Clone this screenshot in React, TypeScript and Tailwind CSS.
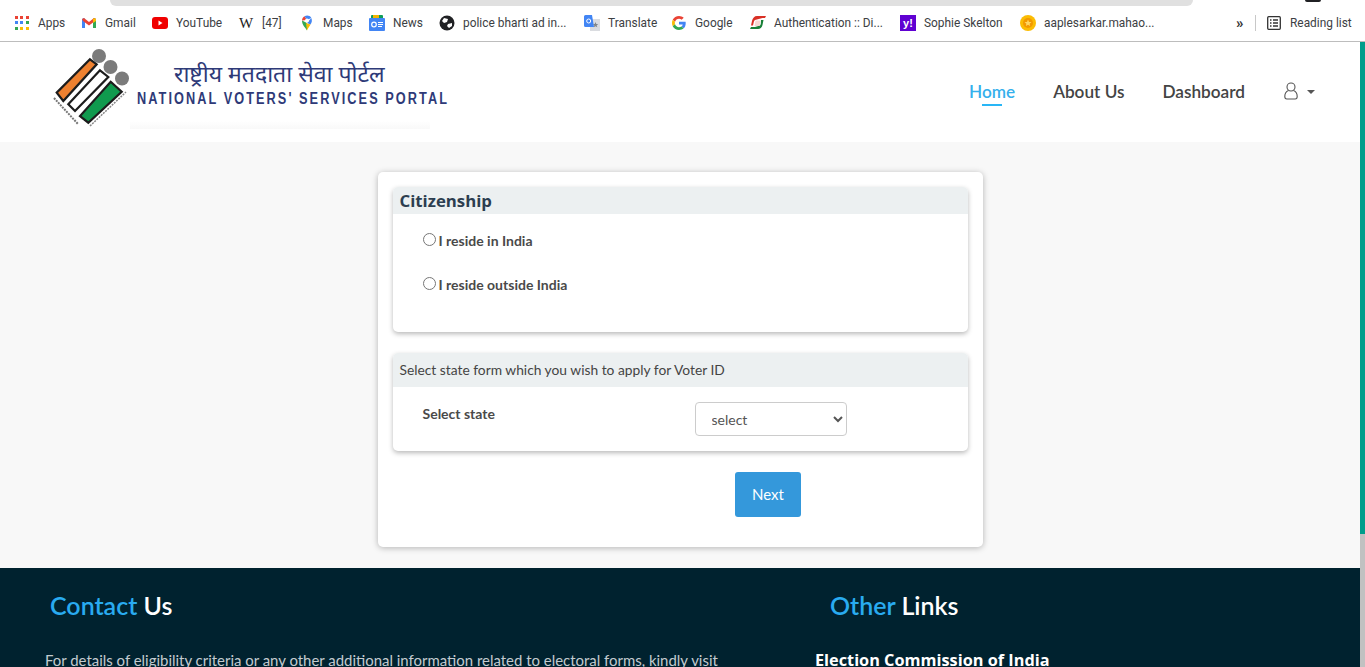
import type { ReactNode } from "react";

function AppsIcon() {
  const colors = ["#ea4335", "#ea4335", "#ea4335", "#4285f4", "#4285f4", "#34a853", "#34a853", "#fbbc05", "#fbbc05"];
  return (
    <div className="grid h-[14px] w-[14px] grid-cols-3 gap-[2px]">
      {colors.map((c, i) => (
        <span key={i} className="block h-[3px] w-[3px]" style={{ backgroundColor: c }} />
      ))}
    </div>
  );
}

function GmailIcon() {
  return (
    <svg viewBox="0 0 16 16" className="size-4">
      <path d="M1 13V4l2-1 1 1v9z" fill="#4285f4" />
      <path d="M12 13V4l1-1 2 1v9z" fill="#34a853" />
      <path d="M1 4l2-1 5 4 5-4 2 1-1 2-6 4.500L2 6z" fill="#ea4335" />
      <path d="M12 4l1-1 2 1v2l-3 2z" fill="#fbbc05" />
    </svg>
  );
}

function YoutubeIcon() {
  return (
    <svg viewBox="0 0 16 16" className="size-4">
      <rect x="0" y="2" width="16" height="12" rx="3" fill="#f00000" />
      <path d="M6.500 5.500v5l4-2.500z" fill="#fff" />
    </svg>
  );
}

function MapsIcon() {
  return (
    <svg viewBox="0 0 16 16" className="size-4">
      <path d="M8 15.500C6 12 3 10 3 5.500L8 8z" fill="#34a853" />
      <path d="M3 5.500C3 3.500 4 2 5.500 1.200L8 5z" fill="#ea4335" />
      <path d="M5.500 1.200C8 0 11 .5 12.300 3L8 5z" fill="#4285f4" />
      <path d="M12.300 3C13.400 5.500 12.800 7.500 11.500 9.500L8 8z" fill="#4285f4" />
      <path d="M8 15.500c1-2.500 2.500-4 3.500-6L7 8z" fill="#fbbc05" />
      <circle cx="8" cy="5.500" r="2" fill="#fff" />
    </svg>
  );
}

function NewsIcon() {
  return (
    <svg viewBox="0 0 16 16" className="size-4">
      <rect x="2" y="0" width="12" height="5" rx="1" fill="#0f9d58" />
      <rect x="4" y="0" width="6" height="4" fill="#f4b400" />
      <rect x="0" y="3" width="16" height="13" rx="1" fill="#4285f4" />
      <circle cx="5" cy="9.500" r="2.300" fill="none" stroke="#fff" strokeWidth="1.200" />
      <path d="M9 7.500h5M9 9.500h5M9 11.500h4" stroke="#fff" strokeWidth="1" />
    </svg>
  );
}

function GlobeIcon() {
  return (
    <svg viewBox="0 0 16 16" className="size-4">
      <circle cx="8" cy="8" r="7.500" fill="#202124" />
      <path d="M5 3l4 1-1 3-3 1-2-2zM9 9l4-1 0 3-3 2-2-2z" fill="#fff" />
    </svg>
  );
}

function TranslateIcon() {
  return (
    <svg viewBox="0 0 16 16" className="size-4">
      <rect x="6" y="4" width="10" height="12" fill="#dadce0" />
      <path d="M11.500 7l.8 2 2 .1-1.600 1.200.6 2-1.800-1.100-1.800 1.100.6-2L8.700 9.100l2-.1z" fill="#80868b" />
      <path d="M1.500 0H8l2 12H1.500A1.500 1.500 0 0 1 0 10.500v-9A1.500 1.500 0 0 1 1.500 0z" fill="#4285f4" />
      <circle cx="4.700" cy="6" r="2" fill="none" stroke="#fff" strokeWidth="1" />
    </svg>
  );
}

function GoogleIcon() {
  return (
    <svg viewBox="0 0 48 48" className="h-[14px] w-[14px]">
      <path fill="#ea4335" d="M24 9.500c3.500 0 6.700 1.200 9.200 3.600l6.900-6.900C35.900 2.400 30.500 0 24 0 14.600 0 6.500 5.400 2.600 13.200l8 6.200C12.400 13.700 17.700 9.500 24 9.500z" />
      <path fill="#4285f4" d="M47 24.500c0-1.600-.1-3.100-.4-4.500H24v9h12.900c-.6 3-2.200 5.500-4.700 7.200l7.700 6C44.400 38 47 31.900 47 24.500z" />
      <path fill="#fbbc05" d="M10.500 28.600c-.5-1.400-.8-3-.8-4.600s.3-3.100.8-4.600l-8-6.200C.9 16.500 0 20.100 0 24s.9 7.500 2.600 10.800z" />
      <path fill="#34a853" d="M24 48c6.500 0 11.900-2.100 15.900-5.800l-7.700-6c-2.200 1.500-4.900 2.300-8.200 2.300-6.300 0-11.600-4.200-13.500-9.900l-8 6.200C6.500 42.600 14.600 48 24 48z" />
    </svg>
  );
}

function AuthIcon() {
  return (
    <svg viewBox="0 0 16 16" className="size-4">
      <path d="M7 1h9l-1 2h-2.500L5 5c-.8.5-1 1.200-1.200 2L3 10.500H1L2 6c.6-3 2.500-5 5-5z" fill="#d93025" />
      <path d="M11 5h2.500l-1 5c-.6 2.500-2.300 4-4.500 4H0l1-2h4l5-1.500c.5-.5.6-1 .8-1.800z" fill="#188038" />
      <path d="M5.500 5.500h5L9.500 11h-5z" fill="#f8d7d2" />
    </svg>
  );
}

function YahooIcon() {
  return (
    <div className="flex size-4 items-center justify-center bg-[#6001d2] text-[11px] leading-none font-bold text-white [font-family:'Liberation_Sans',sans-serif]">
      y!
    </div>
  );
}

function CoinIcon() {
  return (
    <svg viewBox="0 0 16 16" className="size-4">
      <circle cx="8" cy="8" r="8" fill="#fbbc04" />
      <circle cx="8" cy="8" r="5" fill="#f29900" />
      <path d="M8 4.500l1 2.400 2.500.2-1.900 1.600.6 2.400L8 9.800l-2.200 1.300.6-2.400-1.900-1.600L7 6.900z" fill="#fdd663" />
    </svg>
  );
}

function ReadingIcon() {
  return (
    <svg viewBox="0 0 14 14" className="h-[14px] w-[14px]" fill="none" stroke="#333" strokeWidth="1.300">
      <rect x=".7" y=".7" width="12.600" height="12.600" rx="1" />
      <path d="M3 4h1.500M3 7h1.500M3 10h1.500M6 4h5M6 7h5M6 10h5" />
    </svg>
  );
}

function Bookmark({ icon, label, width }: { icon: ReactNode; label: string; width: string }) {
  return (
    <div className="flex items-center gap-2">
      <div className="flex w-4 justify-center">{icon}</div>
      <span className={`${width} text-[11.900px] leading-4 whitespace-nowrap text-[#3c4043]`}>{label}</span>
    </div>
  );
}

function BrowserBar() {
  return (
    <div className="relative h-[42px] border-b border-[#bdbdbd] bg-white [font-family:Roboto,sans-serif]">
      <div className="ml-[110px] h-[6px] w-[1083px] rounded-b-[12px] bg-[#e0e0e0]" />
      <div className="absolute top-0 left-[1305px] h-[2px] w-[16px] rounded-b-full bg-[#202124]" />
      <div className="mt-[9px] flex items-center gap-4 pl-[14px]">
        <Bookmark icon={<AppsIcon />} label="Apps" width="w-[27px]" />
        <Bookmark icon={<GmailIcon />} label="Gmail" width="w-[31px]" />
        <Bookmark icon={<YoutubeIcon />} label="YouTube" width="w-[46px]" />
        <Bookmark
          icon={<span className="text-[15px] leading-4 text-[#222] [font-family:'Liberation_Serif',serif]">W</span>}
          label="[47]"
          width="w-[21px]"
        />
        <Bookmark icon={<MapsIcon />} label="Maps" width="w-[30px]" />
        <Bookmark icon={<NewsIcon />} label="News" width="w-[30px]" />
        <Bookmark icon={<GlobeIcon />} label="police bharti ad in..." width="w-[105px]" />
        <Bookmark icon={<TranslateIcon />} label="Translate" width="w-[47px]" />
        <Bookmark icon={<GoogleIcon />} label="Google" width="w-[39px]" />
        <Bookmark icon={<AuthIcon />} label="Authentication :: Di..." width="w-[110px]" />
        <Bookmark icon={<YahooIcon />} label="Sophie Skelton" width="w-[80px]" />
        <Bookmark icon={<CoinIcon />} label="aaplesarkar.mahao..." width="w-[108px]" />
        <div className="ml-[68px] flex items-center">
          <span className="w-[10px] text-[15px] leading-4 font-bold text-[#333]">»</span>
          <span className="ml-[9px] h-[16px] w-px bg-[#c8c8c8]" />
          <div className="ml-[11px]">
            <ReadingIcon />
          </div>
          <span className="ml-[9px] text-[11.900px] leading-4 whitespace-nowrap text-[#3c4043]">Reading list</span>
        </div>
      </div>
    </div>
  );
}

function Logo() {
  return (
    <div className="relative mb-[8px] ml-[50px] flex items-start">
      <svg viewBox="10 5 80 85" className="h-[85px] w-[80px]">
        <circle cx="59" cy="15" r="7" fill="#7b7b7b" />
        <circle cx="70.500" cy="26" r="7" fill="#7b7b7b" />
        <circle cx="82" cy="37.500" r="7" fill="#7b7b7b" />
        <polygon points="50,18.300 56.700,23.300 23.300,60 16.700,51.700" fill="#ee8130" stroke="#1c1c1c" strokeWidth="2.200" />
        <polygon points="60,29.300 68.300,36 35,70 28.300,63.300" fill="#fff" stroke="#1c1c1c" strokeWidth="2.200" />
        <polygon points="70.700,40.700 81.700,50.700 48.300,81.700 40,75" fill="#109a4e" stroke="#1c1c1c" strokeWidth="2.200" />
        <path d="M14 57l24 26" stroke="#777" strokeWidth="2" strokeDasharray="2 1" />
        <path d="M50 85l36-34" stroke="#888" strokeWidth="1.500" strokeDasharray="2 1" />
      </svg>
      <div className="ml-[7px] flex flex-col pt-[17px] text-[#2e3a78]">
        <div className="pl-[37px] text-[23px] leading-[26px] whitespace-nowrap [font-family:'Noto_Sans_Devanagari','Noto_Sans',sans-serif]">
          राष्ट्रीय मतदाता सेवा पोर्टल
        </div>
        <div className="mt-[1px] origin-left scale-x-[0.795] text-[16px] leading-[18px] font-bold tracking-[2.600px] whitespace-nowrap [font-family:'Liberation_Sans',sans-serif]">
          NATIONAL VOTERS' SERVICES PORTAL
        </div>
      </div>
      <div className="absolute top-[75px] left-[80px] h-[8px] w-[300px] bg-gradient-to-b from-white to-[#f6f6f6] opacity-70" />
    </div>
  );
}

function Header() {
  return (
    <header className="flex h-[100px] items-center bg-white">
      <Logo />
      <nav className="mb-[1px] ml-auto flex items-center pr-[45px] text-[17.200px] font-semibold text-[#444]">
        <a className="relative text-[#35b0ec]">
          Home
          <span className="absolute top-[25px] left-[13px] h-[2px] w-[20px] bg-[#29b6f6]" />
        </a>
        <a className="ml-[38px]">About Us</a>
        <a className="ml-[38px]">Dashboard</a>
        <svg viewBox="0 0 14 18" className="ml-[39px] h-[18px] w-[14px]" fill="none" stroke="#555" strokeWidth="1.100">
          <circle cx="7" cy="5" r="4" />
          <path d="M4.500 8.500C2 9.500.8 11.500.8 14.500c0 1.500.8 2.500 2 2.500h8.400c1.200 0 2-1 2-2.500 0-3-1.200-5-3.700-6" />
        </svg>
        <span className="mt-[2px] ml-[9px] h-0 w-0 border-x-4 border-t-4 border-x-transparent border-t-[#555]" />
      </nav>
    </header>
  );
}

function Panel({ title, children, titleClass }: { title: string; children: ReactNode; titleClass: string }) {
  return (
    <section className="rounded-[5px] bg-white shadow-[0_2px_5px_rgba(0,0,0,0.28)]">
      <div className={`flex items-center rounded-t-[5px] bg-[#ecf0f1] pl-[7px] ${titleClass}`}>{title}</div>
      {children}
    </section>
  );
}

function FormCard() {
  return (
    <div className="w-[605px] rounded-[5px] bg-white px-[15px] pt-[15px] pb-[30px] shadow-[0_1px_6px_rgba(0,0,0,0.28)]">
      <Panel
        title="Citizenship"
        titleClass="h-[27px] text-[16.800px] font-bold text-[#2c3e50] [font-family:'Open_Sans',sans-serif]"
      >
        <div className="h-[118px] pt-[17px] pl-[30px] text-[14px] leading-5 font-bold text-[#4a4a4a]">
          <label className="flex items-start">
            <input type="radio" name="citizenship" className="m-0 mt-[2px] mr-[2px] h-[13px] w-[13px]" />
            <span className="pl-px">I reside in India</span>
          </label>
          <label className="mt-[24px] flex items-start">
            <input type="radio" name="citizenship" className="m-0 mt-[2px] mr-[2px] h-[13px] w-[13px]" />
            <span className="pl-px">I reside outside India</span>
          </label>
        </div>
      </Panel>
      <div className="mt-[21px]">
        <Panel
          title="Select state form which you wish to apply for Voter ID"
          titleClass="h-[34px] pt-px text-[13.800px] text-[#444]"
        >
          <div className="flex h-[64px] items-start pt-[15px] pl-[30px]">
            <span className="mt-[2px] w-[272px] text-[14px] leading-5 font-bold text-[#4a4a4a]">Select state</span>
            <select className="h-[34px] w-[152px] rounded-[4px] border border-[#ccc] bg-white pl-3 text-[14px] text-[#555]">
              <option>select</option>
            </select>
          </div>
        </Panel>
      </div>
      <button className="mt-[21px] ml-[342px] h-[45px] w-[66px] rounded-[3px] bg-[#3498db] pl-px text-[15px] text-white">
        Next
      </button>
    </div>
  );
}

function Footer() {
  return (
    <footer className="flex-1 overflow-hidden bg-[#00222f] pt-[22px]">
      <div className="flex">
        <div className="w-[815px] pl-[45px]">
          <h2 className="pl-[5px] text-[25px] leading-[30px] font-semibold text-white">
            <span className="text-[#29abf0]">Contact</span> Us
          </h2>
          <p className="mt-[30px] text-[14.950px] leading-5 whitespace-nowrap text-[#c3cbcf]">
            For details of eligibility criteria or any other additional information related to electoral forms, kindly visit
          </p>
        </div>
        <div>
          <h2 className="pl-[15px] text-[25px] leading-[30px] font-semibold text-white">
            <span className="text-[#29abf0]">Other</span> Links
          </h2>
          <p className="mt-[30px] text-[16.300px] leading-5 font-bold whitespace-nowrap text-white [font-family:'Open_Sans',sans-serif]">
            Election Commission of India
          </p>
        </div>
      </div>
    </footer>
  );
}

export default function App() {
  return (
    <div className="flex h-[667px] flex-col overflow-hidden bg-white [font-family:Lato,sans-serif]">
      <BrowserBar />
      <div className="flex min-h-0 flex-1">
        <div className="flex min-w-0 flex-1 flex-col">
          <Header />
          <main className="flex justify-center bg-[#f8f8f8] pt-[30px] pb-[21px]">
            <FormCard />
          </main>
          <Footer />
        </div>
        <div className="flex w-[5px] flex-col bg-[#c1c1c1]">
          <div className="h-[492px] bg-[#009d8b]" />
        </div>
      </div>
    </div>
  );
}
